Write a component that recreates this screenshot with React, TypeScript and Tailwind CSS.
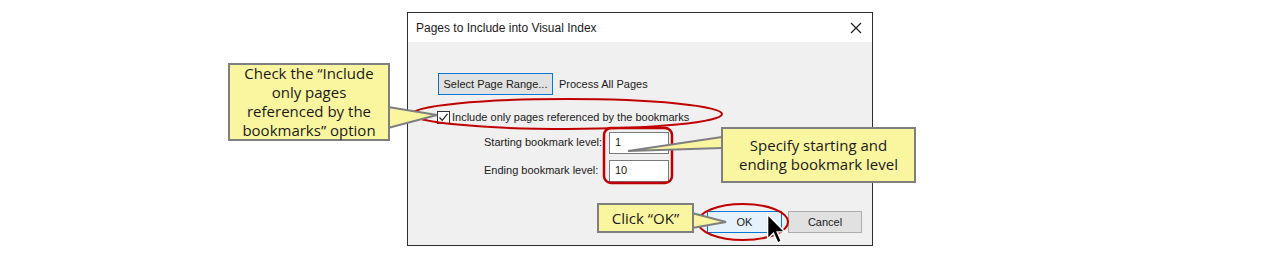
import React from 'react'

const uiFont = { fontFamily: '"Liberation Sans", Arial, sans-serif' }

function Callout({ className, lines }: { className: string; lines: string[] }) {
  return (
    <div
      className={`absolute flex flex-col items-center justify-center border-2 border-[#7f7f7f] bg-[#faf6a0] text-[15px] leading-[19px] text-[#1a1a1a] ${className}`}
      style={{ fontFamily: '"Open Sans", "Noto Sans", sans-serif' }}
    >
      {lines.map((l) => (
        <span key={l} className="whitespace-nowrap">{l}</span>
      ))}
    </div>
  )
}

function Tail({ points, line }: { points: string; line: string }) {
  return (
    <>
      <polygon points={points} fill="#faf6a0" />
      <polyline points={line} fill="none" stroke="#7f7f7f" strokeWidth="2" strokeLinejoin="miter" />
    </>
  )
}

export default function App() {
  return (
    <div className="relative w-[1280px] h-[257px] bg-white overflow-hidden" style={uiFont}>
      {/* dialog */}
      <div className="mx-auto mt-[12px] w-[466px] h-[234px] border border-[#2f2f2f] bg-[#f0f0f0] flex flex-col">
        <div className="h-[29px] bg-white flex items-center justify-between pl-[8px] pr-[8px] shrink-0">
          <span className="text-[12px] text-[#1a1a1a]">Pages to Include into Visual Index</span>
          <svg width="12" height="12" viewBox="0 0 12 12" className="mr-[2px]">
            <path d="M1 1 L11 11 M11 1 L1 11" stroke="#1a1a1a" strokeWidth="1.1" />
          </svg>
        </div>
        <div className="flex-1 flex flex-col pl-[30px] pr-[10px] pt-[31px] pb-[12px] text-[11px] text-[#1a1a1a]">
          <div className="flex items-center gap-[6px]">
            <div className="h-[22px] w-[115px] border border-[#0078d7] bg-[#e1e1e1] flex items-center justify-center">
              <span className="px-[3px] w-full h-full flex items-center justify-center border border-[#e1e1e1]">Select Page Range...</span>
            </div>
            <span>Process All Pages</span>
          </div>
          <div className="flex items-center gap-[2px] mt-[14px] -ml-[1px]">
            <div className="w-[13px] h-[13px] border border-[#333] bg-white flex items-center justify-center">
              <svg width="11" height="11" viewBox="0 0 11 11">
                <path d="M1.5 5.5 L4.2 8.3 L9.5 1.8" fill="none" stroke="#222" strokeWidth="1.2" />
              </svg>
            </div>
            <span>Include only pages referenced by the bookmarks</span>
          </div>
          <div className="grid grid-cols-[125px_60px] gap-y-[6px] items-center mt-[6px] ml-[46px]">
            <span>Starting bookmark level:</span>
            <div className="h-[22px] border border-[#7a7a7a] bg-white flex items-center pl-[5px]">1</div>
            <span>Ending bookmark level:</span>
            <div className="h-[22px] border border-[#7a7a7a] bg-white flex items-center pl-[5px]">10</div>
          </div>
          <div className="mt-auto flex justify-end gap-[6px]">
            <div className="h-[22px] w-[75px] border border-[#0078d7] bg-[#e5f1fb] flex items-center justify-center">OK</div>
            <div className="h-[22px] w-[74px] border border-[#adadad] bg-[#e1e1e1] flex items-center justify-center">Cancel</div>
          </div>
        </div>
      </div>

      {/* annotation marks */}
      <svg className="absolute left-0 top-0 pointer-events-none" width="1280" height="257">
        <ellipse cx="567" cy="114" rx="155" ry="15" fill="none" stroke="#c00000" strokeWidth="2" />
        <rect x="604" y="128" width="68" height="55" rx="7" fill="none" stroke="#c00000" strokeWidth="2.5" />
        <ellipse cx="743" cy="222" rx="45" ry="18" fill="none" stroke="#c00000" strokeWidth="2" />
        <Tail points="386,107 437,115 386,128" line="388,107 437,115 388,128" />
        <Tail points="724,137 628,151 724,148" line="722,137 628,151 722,148" />
        <Tail points="690,213 726,222 690,228" line="692,213 726,222 692,228" />
      </svg>

      <Callout className="left-[228px] top-[63px] w-[162px] h-[78px]" lines={['Check the \u201CInclude', 'only pages', 'referenced by the', 'bookmarks\u201D option']} />
      <Callout className="left-[721px] top-[127px] w-[195px] h-[56px]" lines={['Specify starting and', 'ending bookmark level']} />
      <Callout className="left-[597px] top-[203px] w-[97px] h-[30px]" lines={['Click \u201COK\u201D']} />

      {/* mouse cursor */}
      <svg className="absolute left-[766px] top-[213px] pointer-events-none" width="20" height="32" viewBox="0 0 13 21">
        <path d="M1 1 L1 17 L4.8 13.3 L7.6 19.6 L10 18.6 L7.3 12.4 L12.4 12.4 Z" fill="#000" stroke="#fff" strokeWidth="0.9" strokeLinejoin="miter" />
      </svg>
    </div>
  )
}
